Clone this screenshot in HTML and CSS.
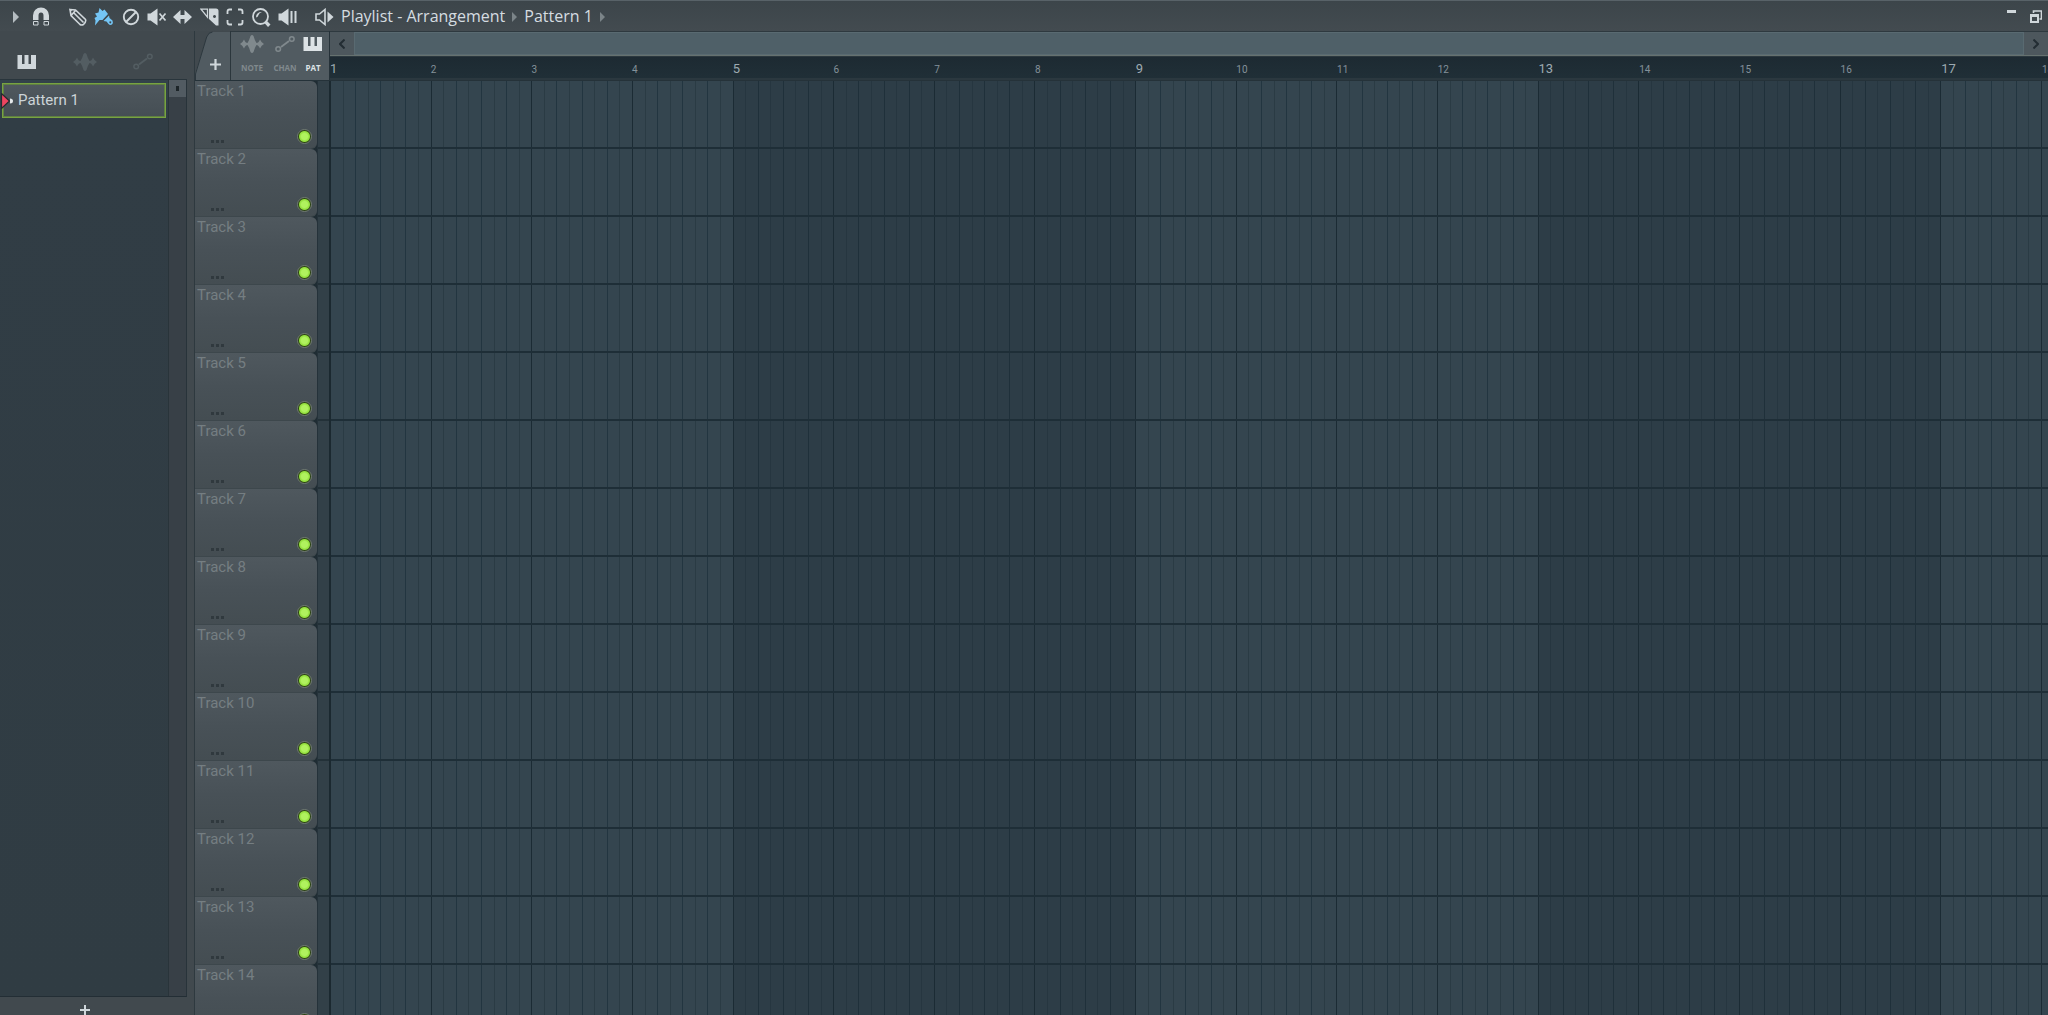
FILE: index.html
```
<!DOCTYPE html>
<html lang="en">

<head>
    <meta charset="UTF-8">
    <meta name="viewport" content="width=device-width, initial-scale=1.0">
    <title>Playlist - Arrangement</title>

    <link rel="stylesheet" href="styles.css">
</head>

<body>
    <svg class="symbols" aria-hidden="true">
        <symbol id="piano" viewBox="0 0 20 16">
            <path d="M0.500 1h4.500v9h2.500v-9h4v9h2.500v-9h5v14h-18.500z" />
        </symbol>
        <symbol id="wave" viewBox="0 0 24 18">
            <path d="M0 9Q2.500 8 4 4.500Q5.500 8 7.500 8Q9 6 10.500 1Q12 -1 13.500 1Q15 6 16.500 8Q18.500 8 20 4.500Q21.500 8 24 9Q21.500 10 20 13.500Q18.500 10 16.500 10Q15 12 13.500 17Q12 19 10.500 17Q9 12 7.500 10Q5.500 10 4 13.500Q2.500 10 0 9z" />
        </symbol>
        <symbol id="curve" viewBox="0 0 20 17">
            <g fill="none" stroke="currentColor" stroke-width="1.500">
                <circle cx="3.200" cy="13.500" r="2.300" />
                <circle cx="16.800" cy="3.500" r="2.300" />
                <path d="M6 11.500L14 5.500" stroke-width="1.800" />
            </g>
        </symbol>
    </svg>

    <header class="toolbar">
        <button class="tool menu-tool" aria-label="Playlist menu">
            <svg width="6" height="12" viewBox="0 0 6 12"><path d="M0 0L6 6L0 12z" /></svg>
        </button>
        <button class="tool magnet-tool" aria-label="Snap">
            <svg width="18" height="20" viewBox="0 0 18 20">
                <path d="M1 13V8.500a8 8 0 0 1 16 0v4.500h-5.500V8.500a2.500 3 0 0 0-5 0v4.500z" />
                <path d="M1.500 14.500h4.500v3.500h-4.500z M12 14.500h4.500v3.500h-4.500z" fill="none" stroke="currentColor" />
            </svg>
        </button>
        <div class="tools">
            <button class="tool" aria-label="Draw">
                <svg width="18" height="18" viewBox="0 0 18 18">
                    <path d="M1 1.500L6.500 2L16.500 11.500Q17.500 13.500 14.500 16.500Q12.500 17.500 11 16.500L2 7.500z M2.500 7L6.500 2.500 M5 5L14.500 14.500" fill="none" stroke="currentColor" stroke-width="1.600" />
                    <path d="M0.500 1l3 0.500-2 2.500z" />
                </svg>
            </button>
            <button class="tool active" aria-label="Paint">
                <svg width="20" height="18" viewBox="0 0 20 18">
                    <path d="M5.500 0L8.500 3L10.500 1.500L14 6L8.500 12L5.500 12L1 17.500L1.500 12.500L0.500 10L3 8.500L1 5.500L4.500 4.500z" />
                    <path d="M9.500 13L15 7.500L15.500 10L18.500 12.500Q19.500 15 18 16.500Q16 17.500 14.500 16L12.500 13.500z M16.300 13.200a1 1 0 1 0 0.010 0z" fill-rule="evenodd" />
                </svg>
            </button>
            <button class="tool" aria-label="Delete">
                <svg width="18" height="18" viewBox="0 0 18 18">
                    <g fill="none" stroke="currentColor" stroke-width="1.900">
                        <circle cx="9" cy="9" r="7.200" />
                        <path d="M4 14L14 4" />
                    </g>
                </svg>
            </button>
            <button class="tool" aria-label="Mute">
                <svg width="20" height="18" viewBox="0 0 20 18">
                    <path d="M0.500 5.500h3L10.500 0.500v17L3.500 12.500h-3z" />
                    <path d="M12.500 5.500l6 7M18.500 5.500l-6 7" stroke="currentColor" stroke-width="1.700" />
                </svg>
            </button>
            <button class="tool" aria-label="Slip">
                <svg width="19" height="14" viewBox="0 0 19 14">
                    <path d="M0 7L7.500 0v5h4v-5L19 7l-7.500 7v-5h-4v5z" />
                </svg>
            </button>
            <button class="tool" aria-label="Slice">
                <svg width="19" height="18" viewBox="0 0 19 18">
                    <path d="M9 0.500h7q2.500 0 2.500 2.500v14.500h-2.500L9 11z M14.500 7a1.500 1.500 0 1 0 0.010 0z" fill-rule="evenodd" />
                    <path d="M1 1.200h6.500v8z" fill="none" stroke="currentColor" stroke-width="1.300" />
                </svg>
            </button>
            <button class="tool" aria-label="Select">
                <svg width="18" height="18" viewBox="0 0 18 18">
                    <path d="M1.500 6V3.500q0-2 2-2H6M12 1.500h2.500q2 0 2 2V6M16.500 12v2.500q0 2-2 2H12M6 16.500H3.500q-2 0-2-2V12" fill="none" stroke="currentColor" stroke-width="1.800" />
                </svg>
            </button>
            <button class="tool" aria-label="Zoom">
                <svg width="19" height="19" viewBox="0 0 19 19">
                    <circle cx="8.500" cy="8.500" r="7.500" fill="none" stroke="currentColor" stroke-width="1.800" />
                    <path d="M4 9.500q0-5.500 6-5.500q-3 1-3.500 3t-2.500 2.500z M12 14.500l2.500-2 4 4-2.500 2.500z" />
                </svg>
            </button>
            <button class="tool" aria-label="Playback">
                <svg width="19" height="18" viewBox="0 0 19 18">
                    <path d="M0.500 5.500h3L10.500 0.500v17L3.500 12.500h-3z M12.500 3h2v12h-2z M16.500 3h2v12h-2z" />
                </svg>
            </button>
        </div>
        <nav class="title">
            <button class="tool" aria-label="Playlist options">
                <svg width="19" height="18" viewBox="0 0 19 18">
                    <path d="M1 6h3.500L10 1.500v15L4.500 12H1z" fill="none" stroke="currentColor" stroke-width="1.600" />
                    <path d="M12.500 3.500L18.500 9l-6 5.500z" />
                </svg>
            </button>
            <a href="#">Playlist - Arrangement</a>
            <span class="crumb"></span>
            <a href="#">Pattern 1</a>
            <span class="crumb"></span>
        </nav>
        <div class="window-buttons">
            <button class="tool minimize" aria-label="Minimize">
                <svg width="10" height="4" viewBox="0 0 10 4"><path d="M0 0h9v3h-9z" /></svg>
            </button>
            <button class="tool" aria-label="Restore">
                <svg width="12" height="14" viewBox="0 0 12 14">
                    <path d="M3.500 3V1h8v8h-2" fill="none" stroke="currentColor" stroke-width="1.600" />
                    <path d="M0 4h9v9h-9z M2 7v4h5v-4z" fill-rule="evenodd" />
                </svg>
            </button>
        </div>
    </header>

    <main class="workspace">
        <aside class="picker">
            <div class="picker-tabs">
                <button class="tool" aria-label="Patterns"><svg width="20" height="16"><use href="#piano" /></svg></button>
                <button class="tool dim" aria-label="Audio clips"><svg width="24" height="18"><use href="#wave" /></svg></button>
                <button class="tool dim" aria-label="Automation clips"><svg width="20" height="17"><use href="#curve" /></svg></button>
            </div>
            <div class="picker-body">
                <div class="patterns">
                    <button class="pattern">
                        <svg class="pattern-marker" width="12" height="16" viewBox="0 0 12 16">
                            <path d="M0.500 0.500L8.500 8L0.500 15.500z" fill="#ed4560" stroke="#262b2f" stroke-width="1.200" />
                            <path d="M9 5.500a3 2.500 0 0 1 0 5z" fill="#e4e8ea" />
                        </svg>
                        Pattern 1
                    </button>
                </div>
                <div class="picker-scroll"><button class="scroll-thumb" aria-label="Scroll patterns"></button></div>
            </div>
            <button class="tool add-pattern" aria-label="Add pattern">
                <svg width="10" height="10" viewBox="0 0 10 10"><path d="M4 0h2v4h4v2h-4v4h-2v-4h-4v-2h4z" /></svg>
            </button>
        </aside>

        <section class="arrangement">
            <div class="arrangement-head">
                <div class="head-tab">
                    <svg class="tab-shape" viewBox="0 0 36 49" preserveAspectRatio="none">
                        <path d="M0 49V43L12 6Q14 1 18 1H36V49z" fill="#515b61" />
                        <path d="M0.500 49V43L12 6Q14 1 18 1" fill="none" stroke="#2c373d" />
                    </svg>
                    <button class="tool" aria-label="Add track">
                        <svg width="11" height="11" viewBox="0 0 10 10"><path d="M4 0h2v4h4v2h-4v4h-2v-4h-4v-2h4z" /></svg>
                    </button>
                </div>
                <div class="modes">
                    <button class="mode"><svg width="24" height="18"><use href="#wave" /></svg>NOTE</button>
                    <button class="mode"><svg width="20" height="18"><use href="#curve" /></svg>CHAN</button>
                    <button class="mode mode-on"><svg width="20" height="18"><use href="#piano" /></svg>PAT</button>
                </div>
                <div class="timeline">
                    <div class="scrollbar">
                        <button class="scroll-button" aria-label="Scroll left">
                            <svg width="6" height="10" viewBox="0 0 6 10"><path d="M5.500 0.500L1 5l4.500 4.500" /></svg>
                        </button>
                        <div class="scroll-track"></div>
                        <button class="scroll-button" aria-label="Scroll right">
                            <svg width="6" height="10" viewBox="0 0 6 10"><path d="M0.500 0.500L5 5L0.500 9.500" /></svg>
                        </button>
                    </div>
                    <div class="ruler" id="ruler"></div>
                </div>
            </div>
            <div class="arrangement-body">
                <div class="tracks" id="tracks"></div>
                <div class="gutter"></div>
                <div class="grid" id="grid"></div>
            </div>
        </section>
    </main>

    <script src="script.js"></script>
</body>

</html>
```
FILE: styles.css
```
* { box-sizing: border-box; padding: 0; margin: 0; }

body { display: flex; flex-direction: column; height: 100vh; overflow: hidden; background-color: #41494e; color: #d5dce0; font-family: "Open Sans", "Noto Sans", sans-serif; }

button { border: none; background: none; color: inherit; font: inherit; cursor: pointer; }
a { color: inherit; text-decoration: none; }
svg { display: block; fill: currentColor; }

.symbols { position: absolute; width: 0; height: 0; }

/* top bar */
.toolbar { display: flex; flex: none; align-items: center; height: 31px; padding: 2px 6px 0 12px; border-top: 1px solid #586268; background: linear-gradient(#3c454a, #434b50); }
.tool { display: flex; align-items: center; justify-content: center; color: #d0d7db; }
.menu-tool { width: 8px; color: #b4bcc0; }
.magnet-tool { width: 18px; margin-left: 12px; }
.tools { display: grid; grid-template-columns: repeat(9, 1fr); width: 236px; margin-left: 15px; }
.active { color: #74c5f5; }
.title { display: flex; flex: 1; align-items: center; margin-left: 14px; font-size: 16px; line-height: 22px; white-space: nowrap; }
.title a { margin-left: 7px; padding-bottom: 2px; }
.title .crumb { margin-left: 7px; }
.crumb { border-left: 5px solid #7b8488; border-top: 5px solid transparent; border-bottom: 5px solid transparent; }
.window-buttons { display: flex; gap: 13px; }
.minimize { align-items: flex-start; }

.workspace { display: flex; flex: 1; min-height: 0; }

/* pattern picker */
.picker { display: flex; flex: none; flex-direction: column; width: 195px; padding-right: 7px; border-right: 1px solid #2e393f; }
.picker-tabs { display: flex; flex: none; align-items: center; gap: 36px; height: 49px; padding: 13px 0 0 17px; border-bottom: 1px solid #29353c; }
.dim { color: #535d62; }
.picker-body { display: flex; flex: 1; min-height: 0; border-right: 1px solid #28333a; border-bottom: 1px solid #232e35; }
.patterns { flex: 1; padding: 3px 2px 0; background: linear-gradient(#33424a, #313d45 40px, #303c43); }
.pattern { position: relative; display: block; width: 100%; height: 35px; padding: 0 0 1px 15px; border: 1px solid #78a341; box-shadow: inset 0 0 0 1px #5f7f43; background: linear-gradient(#4f585e, #454e54); color: #ccd4d8; font: 15px Roboto, sans-serif; text-align: left; }
.pattern-marker { position: absolute; left: -2px; top: 9px; }
.picker-scroll { width: 18px; border-left: 1px solid #29343a; background-color: #384047; }
.scroll-thumb { display: flex; align-items: center; justify-content: center; width: 100%; height: 17px; background-color: #525b62; }
.scroll-thumb::before { content: ""; width: 3px; height: 5px; background-color: #1d2529; }
.add-pattern { flex: none; height: 18px; padding: 8px 17px 0 0; align-items: flex-start; }

/* playlist */
.arrangement { display: flex; flex: 1; flex-direction: column; min-width: 0; }
.arrangement-head { display: flex; flex: none; height: 50px; border-bottom: 1px solid #253239; }
.head-tab { position: relative; display: flex; flex: none; align-items: flex-end; justify-content: center; width: 36px; padding: 0 0 10px 5px; border-right: 1px solid #2b363c; }
.head-tab .tool { position: relative; }
.tab-shape { position: absolute; left: 0; top: 0; width: 100%; height: 100%; }
.modes { display: grid; flex: none; grid-template-columns: 38px 28px 28px; width: 98px; padding: 3px 0 0 2px; border-top: 1px solid #2f3a40; background-color: #515b61; }
.mode { display: flex; flex-direction: column; align-items: center; gap: 10px; color: #80898d; font-size: 8px; line-height: 10px; font-weight: 700; }
.mode-on { color: #dde3e6; }

.timeline { display: flex; flex: 1; flex-direction: column; min-width: 0; border-left: 1px solid #253138; background-color: #2b383f; }
.scrollbar { display: flex; height: 25px; border-top: 1px solid #2e393f; border-bottom: 1px solid #66716f; }
.scroll-button { display: flex; align-items: center; justify-content: center; width: 24px; background-color: #4d575d; }
.scroll-button svg { fill: none; stroke: #232d33; stroke-width: 2; }
.scroll-track { flex: 1; border: 1px solid #596a71; background-color: #4f6068; }
.ruler { display: flex; flex: 1; margin: 1px 0 2px; overflow: hidden; background: linear-gradient(#1d2a32, #202f37); color: #84919a; font-family: Roboto, "Open Sans", sans-serif; }
.ruler span { flex: none; width: calc(100% / 17.060); font-size: 10px; line-height: 25px; }
.ruler .major { font-size: 13px; line-height: 23px; color: #9daab1; }

.arrangement-body { display: flex; flex: 1; min-height: 0; overflow: hidden; }
.tracks { flex: none; width: 122px; background-color: #1f2c33; }
.track { display: flex; flex-direction: column; justify-content: space-between; height: 68px; padding: 0 5px 4px 2px; border-bottom: 1px solid #3d474c; border-radius: 0 6px 6px 0; background: linear-gradient(#4f585e, #485157 50%, #444d52); }
.track-name { color: #757e82; font: 15px/20px Roboto, sans-serif; }
.track-foot { display: flex; align-items: flex-end; justify-content: space-between; }
.track-dots { width: 13px; height: 3px; margin: 0 0 1px 14px; background: repeating-linear-gradient(90deg, #30393e 0 3px, transparent 3px 5px); }
.led { width: 15px; height: 15px; border: 1px solid #707a70; border-radius: 50%; background: radial-gradient(circle, #b0f25e 0 3px, #90dc3a 5px, #2d4415 6px); }
.gutter { flex: none; width: 14px; border-left: 1px solid #25323a; border-right: 2px solid #1b2930; background: repeating-linear-gradient(#324048 0 66px, #233138 66px 68px); }

.grid { position: relative; display: flex; flex: 1; min-width: 0; overflow: hidden; }
.bar { display: flex; flex: none; width: calc(100% / 17.060); border-right: 1px solid #1b2b34; background-color: #34454f; }
.bar-dark { background-color: #2d3d47; }
.step { flex: 1; border-right: 1px solid #2a3b44; }
.step:nth-child(even) { border-right-color: #223540; }
.bar-dark .step { border-right-color: #263640; }
.bar-dark .step:nth-child(even) { border-right-color: #1f303a; }
.step:last-child { border-right: none; }
.grid::after { content: ""; position: absolute; inset: 0; background: repeating-linear-gradient(transparent 0 66px, #1e2e37 66px 68px); }
```
FILE: script.js
```
const ruler = document.getElementById("ruler");
const grid = document.getElementById("grid");
const tracks = document.getElementById("tracks");

for (let i = 0; i < 18; i++) {
    ruler.innerHTML += `<span class="${i % 4 == 0 ? "major" : ""}">${i + 1}</span>`;

    // every second group of four bars is darker
    const dark = Math.floor(i / 4) % 2 == 1;
    grid.innerHTML += `<div class="bar ${dark ? "bar-dark" : ""}">${'<div class="step"></div>'.repeat(8)}</div>`;
}

for (let i = 1; i <= 14; i++) {
    tracks.innerHTML += `
        <div class="track">
            <span class="track-name">Track ${i}</span>
            <div class="track-foot">
                <span class="track-dots"></span>
                <button class="led" aria-label="Mute track ${i}"></button>
            </div>
        </div>`;
}
```
